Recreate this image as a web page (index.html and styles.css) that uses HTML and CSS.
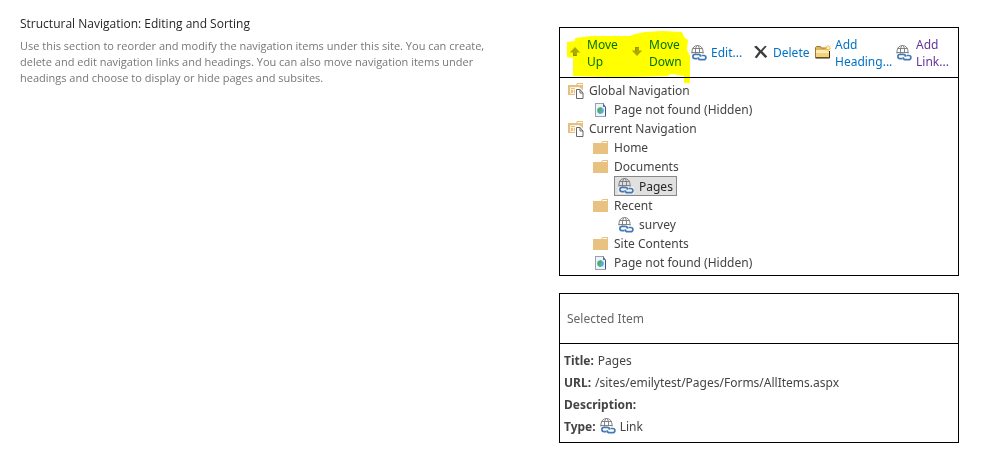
FILE: index.html
```
<!DOCTYPE html>
<html lang="en">
<head>
<meta charset="utf-8">
<meta name="viewport" content="width=device-width, initial-scale=1">
<title>Structural Navigation</title>
<link rel="stylesheet" href="styles.css">
</head>
<body>
<svg class="sprite" aria-hidden="true">
  <symbol id="up" viewBox="0 0 16 16"><path d="M8 2 13.200 7.500H10v3.500H6V7.500H2.800z" fill="#a9a9a9"/><path d="M6.500 7.500v3h3" fill="none" stroke="#8c8c8c" stroke-width=".8"/></symbol>
  <symbol id="down" viewBox="0 0 16 16"><path d="M8 11 2.800 5.500H6V2h4v3.500h3.200z" fill="#a9a9a9"/><path d="M6.500 5.500V2.500h3" fill="none" stroke="#8c8c8c" stroke-width=".8"/></symbol>
  <symbol id="link" viewBox="0 0 16 16">
    <path d="M1 8.500V6Q1.500 .8 6.500 .5 11.500 .8 12 6v2.500M.5 7.500h12M1.500 3.500h10M4.500 8.500V4Q4.800 1.500 6.500 .5 8.200 1.500 8.500 4v4" fill="none" stroke="#777" stroke-width=".9"/>
    <path d="M0 9h16v7H0z" fill="#fff" opacity=".5"/>
    <g fill="none" stroke="#4479b5" stroke-width="1.700"><path d="M6.500 13.600H4a2.100 2.100 0 0 1 0-4.200h3.200q2.300 0 2.300 2.300"/><path d="M10.500 10.500h2.300a2.100 2.100 0 0 1 0 4.200H9.500q-2.300 0-2.300-2.400"/></g>
  </symbol>
  <symbol id="delete" viewBox="0 0 16 16"><path d="M1 1.800 3.500 .8l4.300 4.400L12 .8l1.700.7-4.400 4.800 5 5.300-2 1.500-4.600-5-4 5.200-2-1.100L6 6.400z" fill="#3b3b3b"/></symbol>
  <symbol id="heading" viewBox="0 0 16 16"><path d="M.5 12.500v-10l1-1h4l1 1.500h7v9.500z" fill="#e0b45c" stroke="#9b7a39"/><path d="M1 6h13v6H1z" fill="#f3d27a"/><path d="M1 5h13v3H1z" fill="#fbecb4"/><path d="M.5 13H14.500V6" fill="none" stroke="#302512"/><path d="M13 0v6.500M9.700 3.200h6.500M10.700 1l4.600 4.600M15.300 1l-4.600 4.600" stroke="#f0b23a" stroke-width=".9"/><circle cx="13" cy="3.200" r="1.300" fill="#fff4b5"/></symbol>
  <symbol id="site" viewBox="0 0 16 16"><path d="M0 2h8l1-2h6v12H0z" fill="#e8c07e"/><path d="M9.500 1.500h5" stroke="#fff"/><path d="M2.500 4.500h9v6h-9zM2.500 6.500h9M5.500 6.500v4" fill="none" stroke="#fff" stroke-width=".8"/><path d="M8.500 6.500h3.500l3.500 3.500v5.500h-7z" fill="#fff" stroke="#fff" stroke-width="3"/><path d="M8.500 6.500h3.500l3 3.500v5.500h-6.500zM12 6.500V10h3" fill="#fff" stroke="#666"/></symbol>
  <symbol id="folder" viewBox="0 0 16 16"><path d="M0 3h8l1.500-2H15v13H0z" fill="#e9c282"/><path d="M9.500 2.500H14" stroke="#fff"/></symbol>
  <symbol id="page" viewBox="0 0 16 16"><path d="M3 2h7l3 3v9H3z" fill="#eef4fa"/><path d="M2.500 14.500v-13h8M12.500 14.500h-10" fill="none" stroke="#33415f" stroke-dasharray="1 1"/><path d="M10 1v4h3z" fill="#5b6e91"/><path d="M12.500 5v9" stroke="#40577d"/><circle cx="7.500" cy="8.500" r="3.300" fill="#5aa9e6"/><path d="M5 6.500 8 5.300l1 1.700-2 2 1 2.500-1.500.3L4.500 9z" fill="#4fb552"/><path d="M9 5.500l1.500 1" stroke="#d5ecfa"/></symbol>
</svg>

<main class="layout">
  <section class="intro">
    <h1 class="intro-title">Structural Navigation: Editing and Sorting</h1>
    <p class="intro-text">Use this section to reorder and modify the navigation items under this site. You can create, delete and edit navigation links and headings. You can also move navigation items under headings and choose to display or hide pages and subsites.</p>
  </section>

  <div class="panels">
    <section class="panel">
      <nav class="toolbar" aria-label="Navigation actions">
        <a class="tool" href="#"><svg class="icon"><use href="#up"/></svg><span>Move Up</span></a>
        <a class="tool" href="#"><svg class="icon"><use href="#down"/></svg><span>Move Down</span></a>
        <a class="tool" href="#"><svg class="icon"><use href="#link"/></svg><span>Edit...</span></a>
        <a class="tool" href="#"><svg class="icon"><use href="#delete"/></svg><span>Delete</span></a>
        <a class="tool" href="#"><svg class="icon"><use href="#heading"/></svg><span>Add Heading...</span></a>
        <a class="tool visited" href="#"><svg class="icon"><use href="#link"/></svg><span>Add Link...</span></a>
        <svg class="marker" viewBox="0 0 124 52" aria-hidden="true"><path d="M7 14 15 13 15 10 31 8 70 8 75 6 85 4 102 3 122 4 124 9 128 12 127 22 130 28 130 55 124 55 124 48 112 46 107 48 71 49 46 49 13 48 13 30 7 29z" fill="#ff0"/></svg>
      </nav>
      <ul class="tree">
        <li><a class="node" href="#"><svg class="icon"><use href="#site"/></svg>Global Navigation</a>
          <ul class="branch">
            <li><a class="node" href="#"><svg class="icon"><use href="#page"/></svg>Page not found (Hidden)</a></li>
          </ul>
        </li>
        <li><a class="node" href="#"><svg class="icon"><use href="#site"/></svg>Current Navigation</a>
          <ul class="branch">
            <li><a class="node" href="#"><svg class="icon"><use href="#folder"/></svg>Home</a></li>
            <li><a class="node" href="#"><svg class="icon"><use href="#folder"/></svg>Documents</a>
              <ul class="branch">
                <li><a class="node selected" href="#" aria-current="true"><svg class="icon"><use href="#link"/></svg>Pages</a></li>
              </ul>
            </li>
            <li><a class="node" href="#"><svg class="icon"><use href="#folder"/></svg>Recent</a>
              <ul class="branch">
                <li><a class="node" href="#"><svg class="icon"><use href="#link"/></svg>survey</a></li>
              </ul>
            </li>
            <li><a class="node" href="#"><svg class="icon"><use href="#folder"/></svg>Site Contents</a></li>
            <li><a class="node" href="#"><svg class="icon"><use href="#page"/></svg>Page not found (Hidden)</a></li>
          </ul>
        </li>
      </ul>
    </section>

    <section class="panel">
      <h2 class="panel-title">Selected Item</h2>
      <dl class="details">
        <div class="detail"><dt>Title:</dt><dd>Pages</dd></div>
        <div class="detail"><dt>URL:</dt><dd>/sites/emilytest/Pages/Forms/AllItems.aspx</dd></div>
        <div class="detail"><dt>Description:</dt><dd></dd></div>
        <div class="detail"><dt>Type:</dt><dd class="type"><svg class="icon"><use href="#link"/></svg>Link</dd></div>
      </dl>
    </section>
  </div>
</main>
</body>
</html>
```
FILE: styles.css
```
* { box-sizing: border-box; }
body {
  margin: 0;
  background: #fff;
  color: #444;
  font: 12px/17px "Noto Sans", "Open Sans", sans-serif;
}
ul, dl, dd, h1, h2, p { margin: 0; padding: 0; }
ul { list-style: none; }
a { color: inherit; text-decoration: none; }
.sprite { position: absolute; width: 0; height: 0; }
.icon { flex: none; width: 16px; height: 16px; }

.layout {
  display: grid;
  grid-template-columns: minmax(0, 1fr) 400px;
  gap: 59px;
  padding: 15px 41px 15px 20px;
}
.intro { font-family: "Open Sans", "Noto Sans", sans-serif; }
.intro-title { color: #262626; font-size: 12px; font-weight: 400; line-height: 17px; }
.intro-text { margin-top: 6px; color: #777; font-size: 11px; line-height: 16px; }

.panels { display: grid; gap: 17px; padding-top: 12px; }
.panel { border: 1px solid #000; }
.toolbar {
  position: relative;
  display: grid;
  grid-template-columns: 62px 62px 62px 62px 81px minmax(0, 1fr);
  align-items: center;
  height: 50px;
  padding-left: 7px;
  border-bottom: 1px solid #000;
  color: #0072c6;
}
.tool { display: flex; align-items: center; gap: 4px; }
.visited { color: #663399; }
.marker {
  position: absolute;
  top: 0;
  left: 0;
  width: 124px;
  height: 52px;
  overflow: visible;
  mix-blend-mode: multiply;
  pointer-events: none;
}

.tree { padding: 3px 8px; }
.branch { padding-left: 25px; }
.node { display: flex; align-items: center; gap: 5px; width: fit-content; height: 19px; }
.selected {
  height: 20px;
  margin-left: -4px;
  padding: 0 3px;
  border: 1px solid #888;
  background: #e0e0e0;
  color: #262626;
}

.panel-title {
  padding: 16px 7px;
  border-bottom: 1px solid #000;
  color: #666;
  font-size: 12px;
  font-weight: 400;
}
.details { padding: 5px 4px; }
.detail { display: flex; align-items: center; gap: 4px; min-height: 22px; }
.detail dt { font-weight: 700; }
.type { display: flex; align-items: center; gap: 4px; }
```
